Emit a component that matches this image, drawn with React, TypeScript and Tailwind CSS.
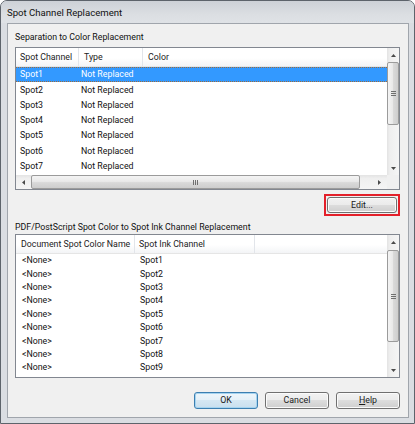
import React from 'react';

// Win7-style "Spot Channel Replacement" dialog

const separationRows = ['Spot1', 'Spot2', 'Spot3', 'Spot4', 'Spot5', 'Spot6', 'Spot7'];
const inkRows = ['Spot1', 'Spot2', 'Spot3', 'Spot4', 'Spot5', 'Spot6', 'Spot7', 'Spot8', 'Spot9'];

function Arrow({ dir }: { dir: 'up' | 'down' | 'left' | 'right' }) {
  const pts = {
    up: '0,3 2.5,0 5,3',
    down: '0,0 5,0 2.5,3',
    left: '3,0 3,5 0,2.5',
    right: '0,0 0,5 3,2.5',
  }[dir];
  const vertical = dir === 'up' || dir === 'down';
  return (
    <svg width={vertical ? 5 : 3} height={vertical ? 3 : 5} viewBox={vertical ? '0 0 5 3' : '0 0 3 5'}>
      <polygon points={pts} fill="#4a4a4a" />
    </svg>
  );
}

function VScroll({ up, thumb, down }: { up: number; thumb: number; down: number }) {
  return (
    <div className="flex h-full w-[12px] flex-col bg-[linear-gradient(90deg,#e3e3e3,#efefef_25%,#f5f5f5)]">
      <div className="flex items-center justify-center" style={{ height: up }}>
        <Arrow dir="up" />
      </div>
      <div
        className="flex items-center justify-center rounded-[2px] border border-[#9b9b9b] bg-[linear-gradient(90deg,#f4f4f4,#e9e9e9_45%,#d9d9d9_55%,#cdcdcd)]"
        style={{ height: thumb }}
      >
        <div className="flex flex-col gap-[1px]">
          <div className="h-[1px] w-[5px] bg-[#6f6f6f]" />
          <div className="h-[1px] w-[5px] bg-[#6f6f6f]" />
          <div className="h-[1px] w-[5px] bg-[#6f6f6f]" />
        </div>
      </div>
      <div className="flex-1" />
      <div className="flex items-center justify-center" style={{ height: down }}>
        <Arrow dir="down" />
      </div>
    </div>
  );
}

function HScroll() {
  return (
    <div className="flex h-[14px] w-full bg-[linear-gradient(180deg,#e3e3e3,#efefef_25%,#f5f5f5)]">
      <div className="flex w-[15px] items-center justify-center">
        <Arrow dir="left" />
      </div>
      <div className="flex w-[329px] items-center justify-center rounded-[2px] border border-[#9b9b9b] bg-[linear-gradient(180deg,#f4f4f4,#e9e9e9_45%,#d9d9d9_55%,#cdcdcd)]">
        <div className="flex gap-[1px]">
          <div className="h-[5px] w-[1px] bg-[#6f6f6f]" />
          <div className="h-[5px] w-[1px] bg-[#6f6f6f]" />
          <div className="h-[5px] w-[1px] bg-[#6f6f6f]" />
        </div>
      </div>
      <div className="flex-1" />
      <div className="flex w-[15px] items-center justify-center">
        <Arrow dir="right" />
      </div>
    </div>
  );
}

function HeaderCell({ w, pl, children, last }: { w?: number; pl: number; children?: React.ReactNode; last?: boolean }) {
  return (
    <div
      className={`flex h-full items-center truncate text-[#222] ${last ? 'flex-1' : 'border-r border-[#e2e5ea]'}`}
      style={{ width: w, paddingLeft: pl }}
    >
      {children}
    </div>
  );
}

function WinButton({ children, primary }: { children: React.ReactNode; primary?: boolean }) {
  return (
    <button
      className={`flex h-[17px] w-[64px] items-center justify-center rounded-[3px] border font-normal text-[#1a1a1a] ${
        primary
          ? 'border-[#3c7fb1] bg-[linear-gradient(#eef6fb,#e4f0f8_50%,#d5e7f3_50%,#c9dfee)] shadow-[inset_0_0_0_1px_#a6d4f0]'
          : 'border-[#707070] bg-[linear-gradient(#f2f2f2,#ebebeb_50%,#dddddd_50%,#cfcfcf)] shadow-[inset_0_0_0_1px_#fbfbfb]'
      }`}
    >
      {children}
    </button>
  );
}

export default function App() {
  return (
    <div className="h-[424px] w-[415px] bg-white font-['Roboto',sans-serif] text-[8.8px] font-normal leading-none">
      <div className="flex h-[424px] w-[415px] flex-col rounded-t-[7px] border border-[#5d636b] bg-[#dadde2]">
        {/* Title bar */}
        <div className="flex h-[22px] items-center rounded-t-[6px] bg-[linear-gradient(180deg,#cdd1d7,#dbdee2_60%,#dfe2e6)] pl-[6px] pt-[1px] text-[9.6px] text-[#111]">
          Spot Channel Replacement
        </div>

        <div className="flex flex-1 pb-[5px] pl-[6px] pr-[5px]">
          <div className="flex flex-1 flex-col border border-[#a0a5ac] bg-[#f0f0f0] pl-[7px] pr-[8px] pt-[7px]">
            <div className="flex h-[12px] items-center text-[#111]">Separation to Color Replacement</div>

            {/* Separation list */}
            <div className="mt-[4px] grid h-[143px] grid-cols-[1fr_12px] grid-rows-[1fr_14px] border border-[#828790] bg-white">
              <div className="flex flex-col overflow-hidden">
                <div className="flex h-[19px] border-b border-[#e5e5e5] bg-[linear-gradient(180deg,#ffffff,#ffffff_55%,#f3f4f6)]">
                  <HeaderCell w={63} pl={4}>Spot Channel</HeaderCell>
                  <HeaderCell w={64} pl={5}>Type</HeaderCell>
                  <HeaderCell pl={5} last>Color</HeaderCell>
                </div>
                {separationRows.map((s, i) => (
                  <div
                    key={s}
                    className={`flex h-[15.3px] shrink-0 items-center ${
                      i === 0 ? 'border-y border-dotted border-[#9c6b3c] bg-[#3399ff] text-white' : 'text-[#111]'
                    }`}
                  >
                    <div className="w-[63px] pl-[4px]">{s}</div>
                    <div className="pl-[2px]">Not Replaced</div>
                  </div>
                ))}
              </div>
              <VScroll up={14} thumb={63} down={13} />
              <HScroll />
              <div className="bg-[#f0f0f0]" />
            </div>

            {/* Edit button, highlighted with a red frame */}
            <div className="mt-[4px] flex justify-end">
              <div className="border-2 border-[#e3202a] p-[1px]">
                <button className="flex h-[16px] w-[70px] items-center justify-center rounded-[3px] border border-[#707070] bg-[linear-gradient(#f2f2f2,#ebebeb_50%,#dddddd_50%,#cfcfcf)] text-[#1a1a1a] shadow-[inset_0_0_0_1px_#fbfbfb]">
                  Edit...
                </button>
              </div>
            </div>

            <div className="mt-[5px] flex h-[12px] items-center text-[#111]">
              PDF/PostScript Spot Color to Spot Ink Channel Replacement
            </div>

            {/* Ink channel list */}
            <div className="mt-[1px] flex h-[144px] border border-[#828790] bg-white">
              <div className="flex flex-1 flex-col overflow-hidden">
                <div className="flex h-[19px] shrink-0 border-b border-[#e5e5e5] bg-[linear-gradient(180deg,#ffffff,#ffffff_55%,#f3f4f6)]">
                  <HeaderCell w={119} pl={5}>Document Spot Color Name</HeaderCell>
                  <HeaderCell w={120} pl={4}>Spot Ink Channel</HeaderCell>
                  <HeaderCell pl={4} last />
                </div>
                {inkRows.map((s) => (
                  <div key={s} className="flex h-[13.4px] shrink-0 items-center text-[#111]">
                    <div className="w-[119px] pl-[6px]">&lt;None&gt;</div>
                    <div className="pl-[5px]">{s}</div>
                  </div>
                ))}
              </div>
              <VScroll up={15} thumb={92} down={14} />
            </div>

            {/* Dialog buttons */}
            <div className="mt-[14px] flex justify-end gap-[7px]">
              <WinButton primary>OK</WinButton>
              <WinButton>Cancel</WinButton>
              <WinButton>
                <span>
                  <span className="underline">H</span>elp
                </span>
              </WinButton>
            </div>
          </div>
        </div>
      </div>
    </div>
  );
}
